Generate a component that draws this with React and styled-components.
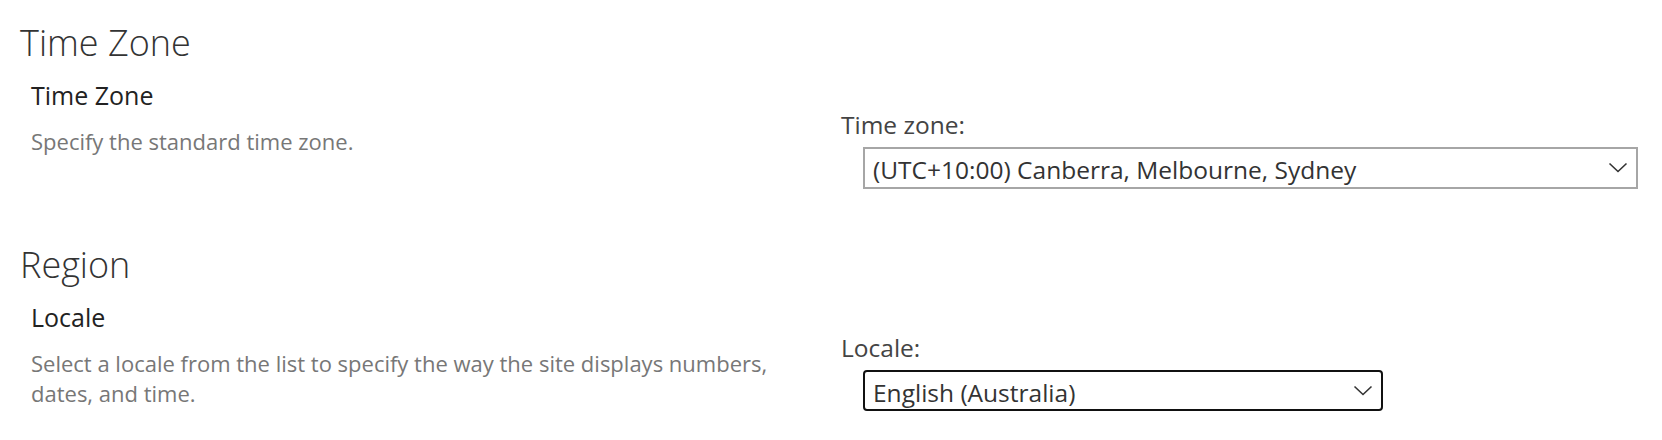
import styled, { createGlobalStyle } from "styled-components";

const GlobalStyle = createGlobalStyle`
  body {
    margin: 0;
    background: #fff;
    font-family: "Open Sans", "Noto Sans", sans-serif;
  }
`;

const Page = styled.div`
  padding: 21px 0 0 20px;
  width: 1662px;
  box-sizing: border-box;
`;

const Section = styled.section`
  & + & {
    margin-top: 54px;
  }
`;

const SectionTitle = styled.h2`
  margin: 0;
  font-size: 36px;
  line-height: 44px;
  font-weight: 300;
  color: #333;
`;

const Row = styled.div`
  display: grid;
  grid-template-columns: 780px 1fr;
  column-gap: 30px;
  margin-top: 15px;
  padding-left: 11px;
`;

const Info = styled.div``;

const FieldTitle = styled.h3`
  margin: 0 0 16px;
  font-size: 25px;
  line-height: 30px;
  font-weight: 400;
  color: #222;
`;

const Description = styled.p`
  margin: 0;
  font-size: 22px;
  line-height: 30px;
  color: #777;
`;

const Field = styled.div`
  padding-top: ${(p) => p.$offset}px;
`;

const Label = styled.div`
  font-size: 24.5px;
  line-height: 30px;
  color: #444;
`;

const Select = styled.div`
  margin: 7px 0 0 22px;
  width: ${(p) => p.$width}px;
  height: ${(p) => p.$height}px;
  box-sizing: border-box;
  display: flex;
  align-items: center;
  justify-content: space-between;
  padding: 3px 8px 0 8px;
  border: 2px solid ${(p) => (p.$active ? "#111" : "#a6a6a6")};
  border-radius: ${(p) => (p.$active ? "4px" : "0")};
  font-size: 24.5px;
  color: #333;
  white-space: nowrap;

  svg {
    margin-top: -3px;
  }
`;

const Chevron = () => (
  <svg width="20" height="12" viewBox="0 0 20 12">
    <polyline
      points="1.5,1.5 10,9.5 18.5,1.5"
      fill="none"
      stroke="#333"
      strokeWidth="1.6"
    />
  </svg>
);

const SettingSection = ({ title, field, description, label, value, width, height, active, offset }) => (
  <Section>
    <SectionTitle>{title}</SectionTitle>
    <Row>
      <Info>
        <FieldTitle>{field}</FieldTitle>
        <Description>{description}</Description>
      </Info>
      <Field $offset={offset}>
        <Label>{label}</Label>
        <Select $width={width} $height={height} $active={active}>
          <span>{value}</span>
          <Chevron />
        </Select>
      </Field>
    </Row>
  </Section>
);

const App = () => {
  return (
    <>
      <GlobalStyle />
      <Page>
        <SettingSection
          title="Time Zone"
          field="Time Zone"
          description="Specify the standard time zone."
          label="Time zone:"
          value="(UTC+10:00) Canberra, Melbourne, Sydney"
          width={775}
          height={42}
          offset={30}
        />
        <SettingSection
          title="Region"
          field="Locale"
          description="Select a locale from the list to specify the way the site displays numbers, dates, and time."
          label="Locale:"
          value="English (Australia)"
          width={520}
          height={41}
          active
          offset={31}
        />
      </Page>
    </>
  );
};

export default App;
